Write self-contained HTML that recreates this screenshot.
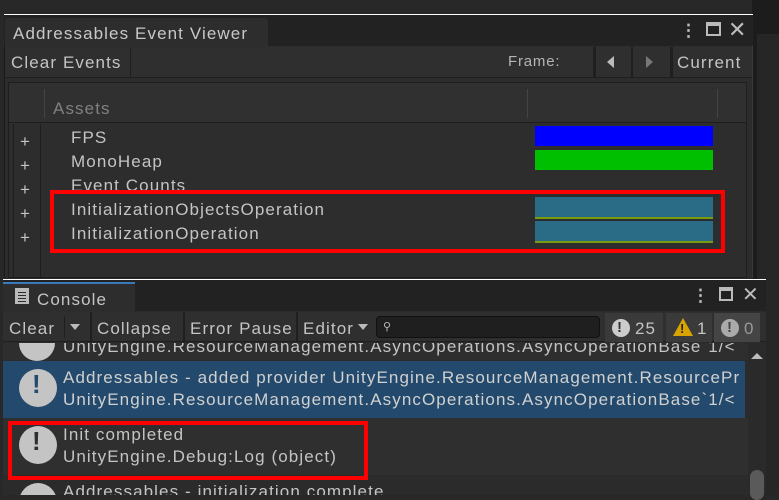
<!DOCTYPE html>
<html><head><style>
*{margin:0;padding:0;box-sizing:border-box}
body{width:779px;height:495px;background:#282828;position:relative;overflow:hidden;font-family:"Liberation Sans",sans-serif;color:#c4c4c4;font-size:17px;letter-spacing:1.1px}
.a{position:absolute}
.t{position:absolute;white-space:nowrap;line-height:20px;margin-top:1px}
</style></head><body>
<div class="a" style="left:752px;top:0;width:27px;height:495px;background:#1c1c1c"></div>
<div class="a" style="left:757px;top:34px;width:22px;height:461px;background:#262626"></div>
<div class="a" style="left:4px;top:14px;width:749px;height:264px;background:#2c2c2c;border-left:1px solid #1a1a1a;border-right:1px solid #3a3a3a"></div>
<div class="a" style="left:4px;top:14px;width:749px;height:1px;background:#fff"></div>
<div class="a" style="left:4px;top:15px;width:749px;height:31px;background:#222"></div>
<div class="a" style="left:5px;top:18px;width:263px;height:29px;background:#2d2d2d;border-radius:3px 3px 0 0"></div>
<div class="t" style="left:13px;top:23px;color:#c8c8c8">Addressables Event Viewer</div>
<div class="t" style="left:680px;top:20px;font-weight:bold;color:#bbb">&#8942;</div>
<div class="a" style="left:706px;top:22px;width:15px;height:14px;border:2px solid #bbb;border-top-width:4px"></div>
<div class="t" style="left:728px;top:19px;font-size:22px;color:#bbb">&#10005;</div>
<div class="a" style="left:5px;top:47px;width:747px;height:31px;background:#2f2f2f;border-bottom:1px solid #1f1f1f"></div>
<div class="a" style="left:130px;top:47px;width:1px;height:30px;background:#1f1f1f"></div>
<div class="t" style="left:11px;top:52px">Clear Events</div>
<div class="t" style="left:508px;top:51px;font-size:15px;color:#b4b4b4;letter-spacing:0.8px">Frame:</div>
<div class="a" style="left:593px;top:47px;width:3px;height:30px;background:#1f1f1f"></div>
<div class="a" style="left:631px;top:47px;width:2px;height:30px;background:#1f1f1f"></div>
<div class="a" style="left:670px;top:47px;width:3px;height:30px;background:#1f1f1f"></div>
<div class="a" style="left:607px;top:56px;width:0;height:0;border-top:6px solid transparent;border-bottom:6px solid transparent;border-right:7px solid #bbb"></div>
<div class="a" style="left:646px;top:56px;width:0;height:0;border-top:6px solid transparent;border-bottom:6px solid transparent;border-left:7px solid #777"></div>
<div class="t" style="left:677px;top:52px">Current</div>
<div class="a" style="left:8px;top:82px;width:739px;height:196px;border:1px solid #1e1e1e;background:#2d2d2d"></div>
<div class="a" style="left:9px;top:83px;width:737px;height:40px;background:#303030;border-bottom:1px solid #1e1e1e"></div>
<div class="a" style="left:44px;top:89px;width:1px;height:29px;background:#444"></div>
<div class="a" style="left:527px;top:89px;width:1px;height:29px;background:#444"></div>
<div class="a" style="left:717px;top:89px;width:1px;height:29px;background:#444"></div>
<div class="t" style="left:53px;top:98px;color:#808080">Assets</div>
<div class="a" style="left:13px;top:124px;width:1px;height:154px;background:#1e1e1e"></div>
<div class="a" style="left:40px;top:124px;width:1px;height:154px;background:#1e1e1e"></div>
<div class="t" style="left:20px;top:131px">+</div>
<div class="t" style="left:20px;top:155px">+</div>
<div class="t" style="left:20px;top:179px">+</div>
<div class="t" style="left:20px;top:203px">+</div>
<div class="t" style="left:20px;top:227px">+</div>
<div class="t" style="left:71px;top:127px">FPS</div>
<div class="t" style="left:71px;top:151px">MonoHeap</div>
<div class="t" style="left:71px;top:175px">Event Counts</div>
<div class="t" style="left:71px;top:199px">InitializationObjectsOperation</div>
<div class="t" style="left:71px;top:223px">InitializationOperation</div>
<div class="a" style="left:535px;top:126px;width:178px;height:20px;background:#0000ff"></div>
<div class="a" style="left:535px;top:150px;width:178px;height:20px;background:#00bf00"></div>
<div class="a" style="left:535px;top:197px;width:178px;height:22px;background:#2a6b85;border-bottom:2px solid #7a9a10"></div>
<div class="a" style="left:535px;top:221px;width:178px;height:22px;background:#2a6b85;border-bottom:2px solid #7a9a10"></div>
<div class="a" style="left:50px;top:190px;width:675px;height:63px;border:4px solid #f00"></div>
<div class="a" style="left:3px;top:279px;width:763px;height:216px;background:#2b2b2b"></div>
<div class="a" style="left:3px;top:279px;width:763px;height:1px;background:#fff"></div>
<div class="a" style="left:3px;top:280px;width:763px;height:31px;background:#222"></div>
<div class="a" style="left:3px;top:282px;width:132px;height:30px;background:#2d2d2d;border-top:2px solid #3a7ab8"></div>
<div class="a" style="left:15px;top:288px;width:14px;height:16px;background:#bbb"></div>
<div class="a" style="left:18px;top:292px;width:8px;height:1px;background:#2d2d2d;box-shadow:0 3px #2d2d2d,0 6px #2d2d2d,0 9px #2d2d2d"></div>
<div class="t" style="left:37px;top:289px">Console</div>
<div class="t" style="left:692px;top:285px;font-weight:bold;color:#bbb">&#8942;</div>
<div class="a" style="left:719px;top:287px;width:14px;height:14px;border:2px solid #bbb;border-top-width:4px"></div>
<div class="t" style="left:742px;top:284px;font-size:20px;color:#bbb">&#10005;</div>
<div class="a" style="left:3px;top:312px;width:763px;height:30px;background:#2f2f2f;border-bottom:1px solid #1f1f1f"></div>
<div class="t" style="left:9px;top:318px">Clear</div>
<div class="a" style="left:64px;top:316px;width:1px;height:22px;background:#1f1f1f"></div>
<div class="a" style="left:70px;top:324px;border-left:5px solid transparent;border-right:5px solid transparent;border-top:6px solid #bbb"></div>
<div class="a" style="left:90px;top:312px;width:2px;height:30px;background:#1f1f1f"></div>
<div class="t" style="left:97px;top:318px">Collapse</div>
<div class="a" style="left:183px;top:312px;width:2px;height:30px;background:#1f1f1f"></div>
<div class="t" style="left:190px;top:318px">Error Pause</div>
<div class="a" style="left:296px;top:312px;width:2px;height:30px;background:#1f1f1f"></div>
<div class="t" style="left:303px;top:318px">Editor</div>
<div class="a" style="left:358px;top:324px;border-left:5px solid transparent;border-right:5px solid transparent;border-top:6px solid #bbb"></div>
<div class="a" style="left:376px;top:316px;width:224px;height:22px;background:#1f1f1f;border-radius:4px;border:1px solid #111"></div>
<div class="t" style="left:383px;top:316px;font-size:11px;color:#bbb">&#9906;</div>
<div class="a" style="left:605px;top:313px;width:58px;height:29px;background:#3a3a3a"></div>
<div class="a" style="left:612px;top:319px;width:18px;height:18px;border-radius:50%;background:#ccc"></div>
<div class="t" style="left:617px;top:317px;font-weight:bold;color:#333;font-size:15px">!</div>
<div class="t" style="left:635px;top:318px">25</div>
<div class="a" style="left:666px;top:313px;width:46px;height:29px;background:#3a3a3a"></div>
<div class="a" style="left:673px;top:318px;border-left:10px solid transparent;border-right:10px solid transparent;border-bottom:18px solid #d9a400"></div>
<div class="t" style="left:680px;top:318px;font-weight:bold;color:#222;font-size:13px">!</div>
<div class="t" style="left:697px;top:318px">1</div>
<div class="a" style="left:714px;top:313px;width:46px;height:29px;background:#454545"></div>
<div class="a" style="left:721px;top:319px;width:18px;height:18px;border-radius:50%;background:#aaa"></div>
<div class="t" style="left:727px;top:317px;font-weight:bold;color:#444;font-size:15px">!</div>
<div class="t" style="left:744px;top:318px;color:#999">0</div>
<div class="a" style="left:3px;top:343px;width:745px;height:152px;overflow:hidden">
  <div class="a" style="left:0;top:0;width:745px;height:17px;background:#2e2e2e"></div>
  <div class="a" style="left:16px;top:-18px;width:36px;height:36px;border-radius:50%;background:#c4c4c4"></div>
  <div class="t" style="left:60px;top:-7px">UnityEngine.ResourceManagement.AsyncOperations.AsyncOperationBase`1/&lt;</div>
  <div class="a" style="left:0;top:18px;width:742px;height:57px;background:#234a6c"></div>
  <div class="a" style="left:16px;top:26px;width:38px;height:38px;border-radius:50%;background:#c4c4c4"></div>
  <div class="t" style="left:29px;top:30px;font-size:26px;font-weight:bold;color:#234a6c">!</div>
  <div class="t" style="left:60px;top:24px;color:#d0d0d0">Addressables - added provider UnityEngine.ResourceManagement.ResourcePr</div>
  <div class="t" style="left:60px;top:46px;color:#d0d0d0">UnityEngine.ResourceManagement.AsyncOperations.AsyncOperationBase`1/&lt;</div>
  <div class="a" style="left:0;top:75px;width:745px;height:57px;background:#2f2f2f"></div>
  <div class="a" style="left:16px;top:83px;width:38px;height:38px;border-radius:50%;background:#c4c4c4"></div>
  <div class="t" style="left:29px;top:87px;font-size:26px;font-weight:bold;color:#2f2f2f">!</div>
  <div class="t" style="left:60px;top:81px">Init completed</div>
  <div class="t" style="left:60px;top:103px">UnityEngine.Debug:Log (object)</div>
  <div class="a" style="left:0;top:132px;width:745px;height:20px;background:#2b2b2b"></div>
  <div class="a" style="left:16px;top:140px;width:38px;height:38px;border-radius:50%;background:#c4c4c4"></div>
  <div class="t" style="left:60px;top:138px">Addressables - initialization complete</div>
</div>
<div class="a" style="left:8px;top:421px;width:360px;height:59px;border:4px solid #f00"></div>
<div class="a" style="left:748px;top:343px;width:18px;height:152px;background:#2a2a2a"></div>
<div class="a" style="left:751px;top:353px;border-left:6px solid transparent;border-right:6px solid transparent;border-bottom:6px solid #bbb"></div>
<div class="a" style="left:750px;top:470px;width:14px;height:30px;border-radius:7px;background:#5a5a5a"></div>
</body></html>
